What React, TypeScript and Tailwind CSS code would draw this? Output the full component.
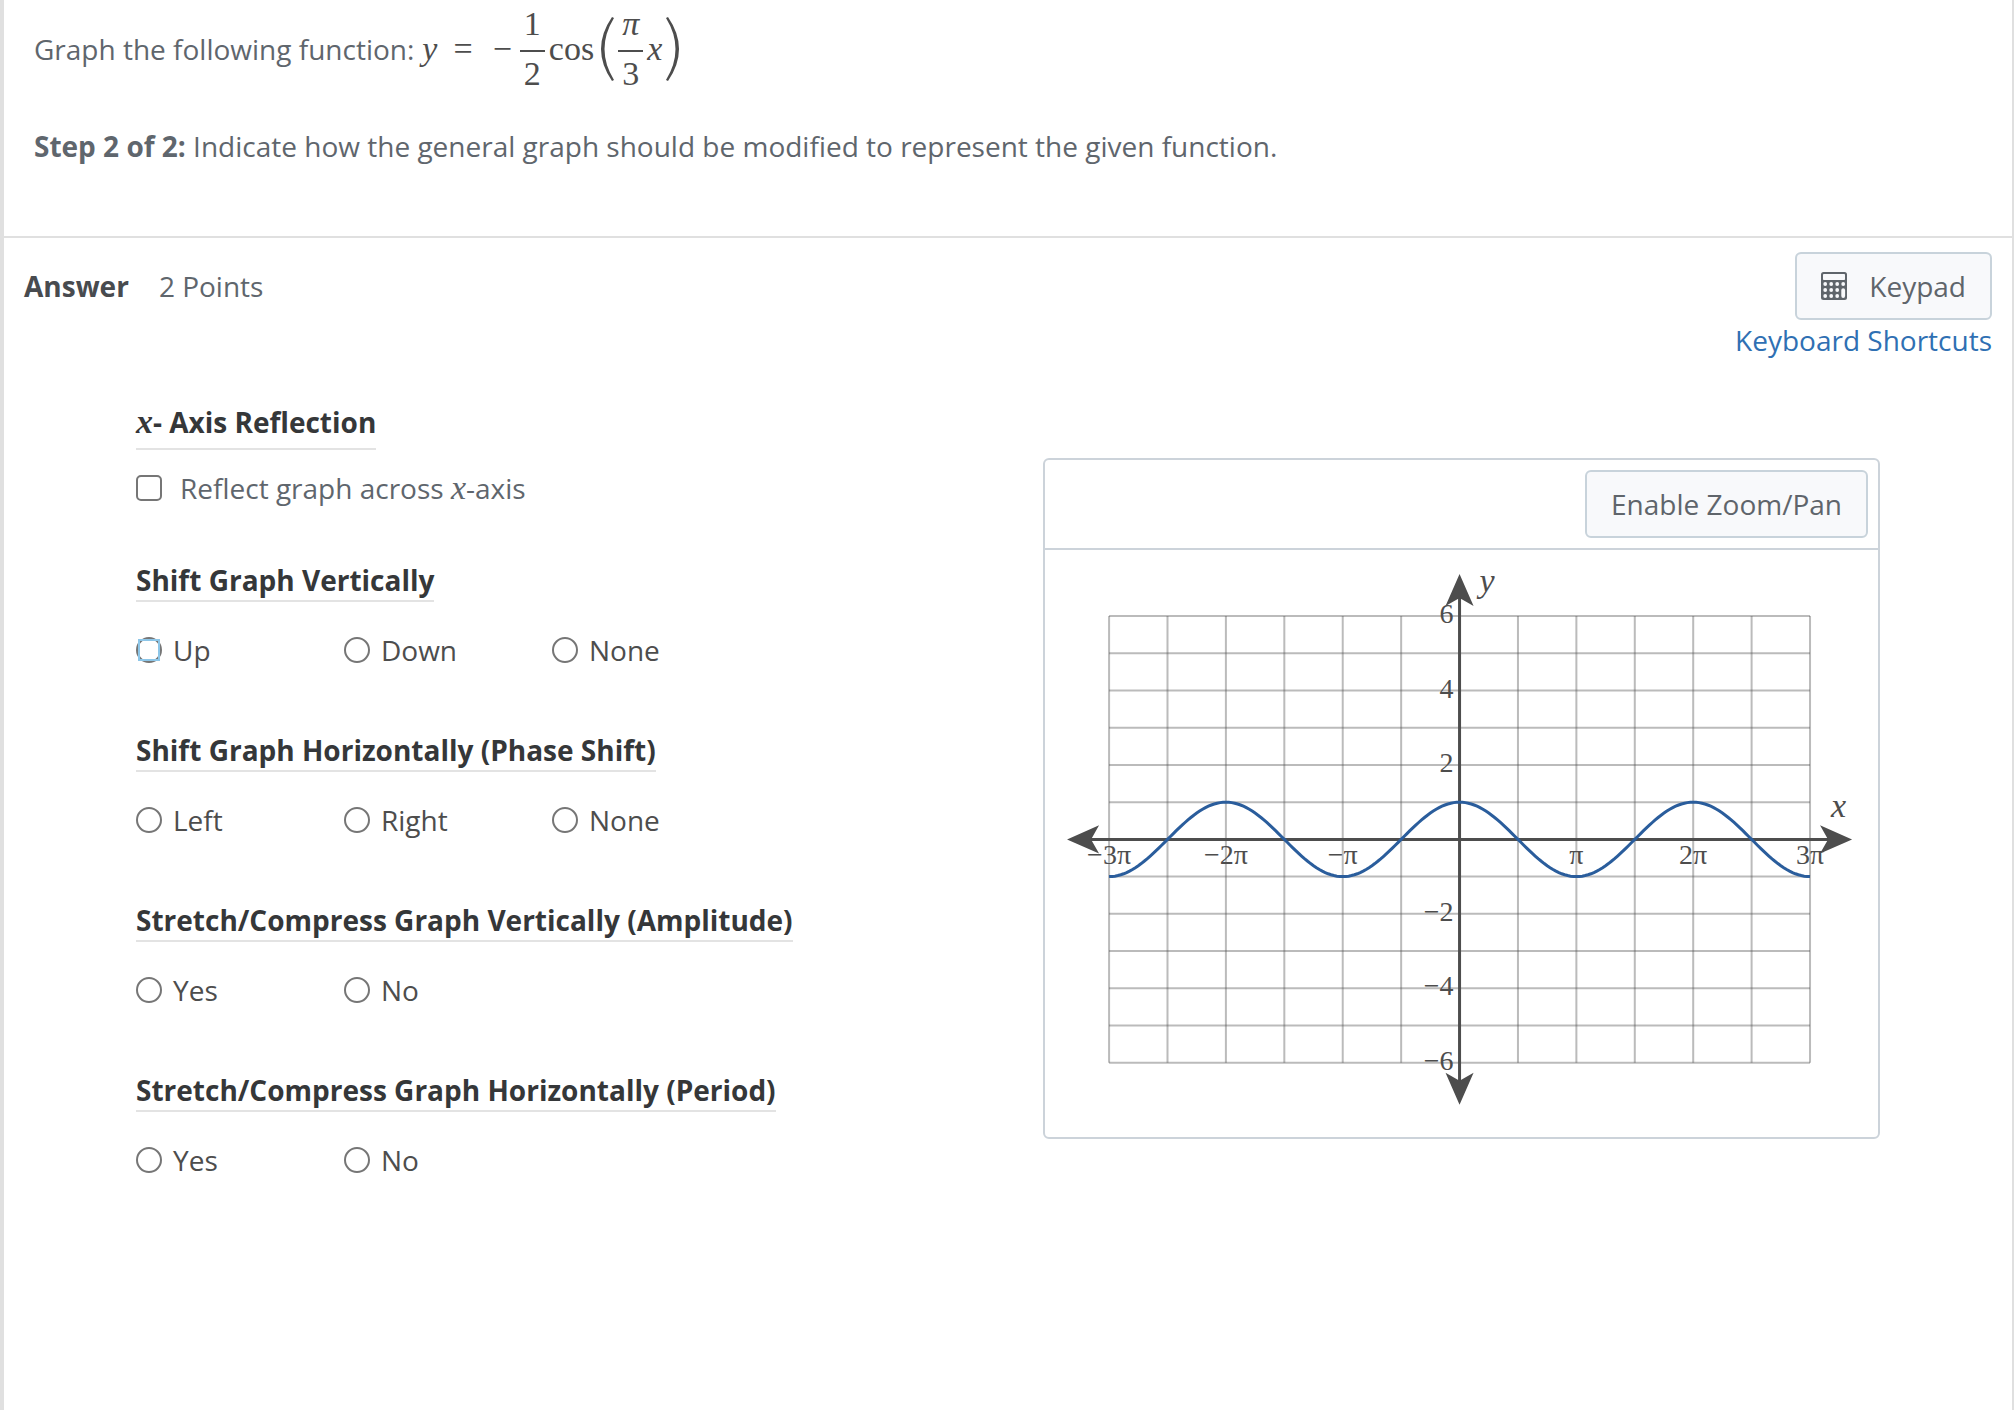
import { useState } from "react";

const CENTER_X = 414;
const CENTER_Y = 289;
const STEP_X = 350 / 6;
const STEP_Y = 223 / 6;

const gridIndexes = [-6, -5, -4, -3, -2, -1, 0, 1, 2, 3, 4, 5, 6];

const xLabels = [
  { value: -6, text: "−3π" },
  { value: -4, text: "−2π" },
  { value: -2, text: "−π" },
  { value: 2, text: "π" },
  { value: 4, text: "2π" },
  { value: 6, text: "3π" },
];

const yLabels = [6, 4, 2, -2, -4, -6];

const questions = [
  { id: "shift-y", title: "Shift Graph Vertically", options: ["Up", "Down", "None"] },
  { id: "shift-x", title: "Shift Graph Horizontally (Phase Shift)", options: ["Left", "Right", "None"] },
  { id: "amplitude", title: "Stretch/Compress Graph Vertically (Amplitude)", options: ["Yes", "No"] },
  { id: "period", title: "Stretch/Compress Graph Horizontally (Period)", options: ["Yes", "No"] },
];

function cosinePoints() {
  const points: string[] = [];
  for (let i = 0; i <= 240; i++) {
    const t = -6 + i / 20;
    const x = CENTER_X + t * STEP_X;
    const y = CENTER_Y - Math.cos((t * Math.PI) / 2) * STEP_Y;
    points.push(`${x.toFixed(2)},${y.toFixed(2)}`);
  }
  return points.join(" ");
}

function Fraction({ top, bottom }: { top: React.ReactNode; bottom: React.ReactNode }) {
  return (
    <span className="flex flex-col items-center">
      <span className="h-12 px-1 leading-11">{top}</span>
      <span className="h-0.5 w-full bg-[#4d4d4d]" />
      <span className="h-11 px-1 leading-11">{bottom}</span>
    </span>
  );
}

function Formula() {
  return (
    <span className="flex items-center font-['Liberation_Serif',serif] text-[34px] leading-9 text-[#4d4d4d]">
      <i>y</i>
      <span className="px-4">=</span>
      <span className="pr-2 pl-1">−</span>
      <Fraction top="1" bottom="2" />
      <span className="pl-1">cos</span>
      <svg width="20" height="66" viewBox="0 0 20 66" className="ml-1" aria-hidden="true">
        <path d="M14 1Q-8 33 14 65L16 64Q-3 33 16 2Z" fill="#4d4d4d" />
      </svg>
      <Fraction top={<i>π</i>} bottom="3" />
      <i className="pl-1">x</i>
      <svg width="20" height="66" viewBox="0 0 20 66" aria-hidden="true">
        <path d="M6 1Q28 33 6 65L4 64Q23 33 4 2Z" fill="#4d4d4d" />
      </svg>
    </span>
  );
}

function KeypadIcon() {
  return (
    <svg width="26" height="28" viewBox="0 0 26 28" aria-hidden="true">
      <rect width="26" height="28" rx="2.5" fill="#5f656b" />
      <rect x="2" y="2" width="22" height="6" rx="0.8" fill="#f8f9fb" />
      {[4.2, 10.2, 16.2, 22.2].map((cx) => (
        <circle key={cx} cx={cx} cy="12" r="1.9" fill="#f8f9fb" />
      ))}
      {[4.2, 10.2, 16.2].map((cx) => (
        <g key={cx} fill="#f8f9fb">
          <circle cx={cx} cy="18" r="1.9" />
          <circle cx={cx} cy="24" r="1.9" />
        </g>
      ))}
      <rect x="20.3" y="16.2" width="3.8" height="9.7" rx="1.9" fill="#f8f9fb" />
    </svg>
  );
}

function Graph() {
  return (
    <svg viewBox="0 0 832 586" className="block w-full" role="img" aria-label="Graph of a cosine curve">
      <g stroke="#4d4d4d" strokeOpacity="0.38" strokeWidth="2">
        {gridIndexes.map((i) => (
          <g key={i}>
            <line x1={CENTER_X + i * STEP_X} x2={CENTER_X + i * STEP_X} y1="66" y2="512" />
            <line x1="64" x2="764" y1={CENTER_Y + i * STEP_Y} y2={CENTER_Y + i * STEP_Y} />
          </g>
        ))}
      </g>
      <g stroke="#4d4d4d" strokeWidth="3">
        <line x1="40" x2="790" y1={CENTER_Y} y2={CENTER_Y} />
        <line x1={CENTER_X} x2={CENTER_X} y1="40" y2="540" />
      </g>
      <g fill="#4d4d4d">
        <path d="M414 24L428 56L414 48L400 56Z" />
        <path d="M414 554L428 522L414 530L400 522Z" />
        <path d="M22 289L54 275L46 289L54 303Z" />
        <path d="M806 289L774 275L782 289L774 303Z" />
      </g>
      <g fill="#4d4d4d" fontFamily="Liberation Serif, serif" fontSize="28">
        {xLabels.map((label) => (
          <text key={label.text} x={CENTER_X + label.value * STEP_X} y="314" textAnchor="middle">
            {label.text}
          </text>
        ))}
        {yLabels.map((value) => (
          <text key={value} x="408" y={CENTER_Y - value * STEP_Y + 7} textAnchor="end">
            {value < 0 ? `−${-value}` : value}
          </text>
        ))}
        <g fontStyle="italic" fontSize="34">
          <text x="434" y="42">y</text>
          <text x="785" y="267">x</text>
        </g>
      </g>
      <polyline points={cosinePoints()} fill="none" stroke="#2a5d9c" strokeWidth="3" />
    </svg>
  );
}

export default function App() {
  const [answers, setAnswers] = useState<Record<string, string>>({});

  return (
    <div className="min-h-screen border-r-2 border-l-4 border-[#e0e0e0] bg-white font-['Open_Sans',sans-serif] text-[28px] leading-10 text-[#5f666d]">
      <header className="flex h-[238px] flex-col gap-[30px] border-b-2 border-[#e0e0e0] px-[30px] pt-0.5">
        <div className="flex items-center gap-2">
          <p>Graph the following function:</p>
          <Formula />
        </div>
        <p>
          <strong>Step 2 of 2:</strong> Indicate how the general graph should be modified to represent the given function.
        </p>
      </header>

      <div className="flex items-start justify-between px-5 pt-[14px]">
        <div className="flex gap-[30px] pt-[14px]">
          <h2 className="font-bold text-[#484b4f]">Answer</h2>
          <p>2 Points</p>
        </div>
        <div className="flex flex-col items-end">
          <button className="flex h-[68px] items-center gap-[22px] rounded-md border-2 border-[#c8d3db] bg-[#f8f9fb] px-6 text-[#5f656b]">
            <KeypadIcon />
            Keypad
          </button>
          <a href="#shortcuts" className="text-[#2f70b3]">Keyboard Shortcuts</a>
        </div>
      </div>

      <main className="flex items-start px-[132px] pt-10">
        <form className="flex-1 pt-0.5">
          <h3 className="inline-block h-12 border-b-2 border-[#e3e3e3] font-bold text-[#353739]">
            <i className="font-['Liberation_Serif',serif] text-[34px] leading-8">x</i>- Axis Reflection
          </h3>
          <label className="mt-[18px] flex h-10 items-center gap-[18px]">
            <input type="checkbox" className="size-[26px] appearance-none rounded-[5px] border-2 border-[#767676]" />
            <span>
              Reflect graph across <i className="font-['Liberation_Serif',serif] text-[34px] leading-8">x</i>-axis
            </span>
          </label>
          <div className="mt-[52px] flex flex-col gap-[60px]">
            {questions.map((question) => (
              <fieldset key={question.id}>
                <legend className="border-b-2 border-[#e3e3e3] font-bold text-[#353739]">{question.title}</legend>
                <div className="flex pt-7">
                  {question.options.map((option) => (
                    <label key={option} className="flex w-52 items-center gap-[11px] text-[#4d4d4d]">
                      <span className="relative flex">
                        <input
                          type="radio"
                          name={question.id}
                          value={option}
                          checked={answers[question.id] === option}
                          onChange={() => setAnswers({ ...answers, [question.id]: option })}
                          className="size-[26px] appearance-none rounded-full border-2 border-[#767676]"
                        />
                        {option === "Up" && <span className="absolute inset-0.5 border-2 border-[#8dc6e8]" />}
                      </span>
                      {option}
                    </label>
                  ))}
                </div>
              </fieldset>
            ))}
          </div>
        </form>

        <section className="mt-[58px] w-[48%] rounded-md border-2 border-[#ccd3da]">
          <div className="flex justify-end border-b-2 border-[#ccd3da] p-[10px]">
            <button className="h-[68px] rounded-md border-2 border-[#c8d3db] bg-[#f8f9fb] px-6 text-[#5f656b]">
              Enable Zoom/Pan
            </button>
          </div>
          <Graph />
        </section>
      </main>
    </div>
  );
}
